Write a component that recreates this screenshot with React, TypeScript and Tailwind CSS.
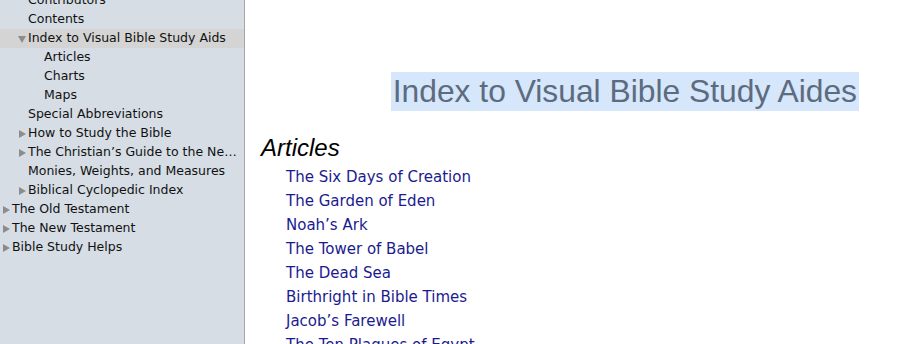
const tree = [
  { label: "Contributors", level: 1, arrow: null },
  { label: "Contents", level: 1, arrow: null },
  { label: "Index to Visual Bible Study Aids", level: 1, arrow: "down", selected: true },
  { label: "Articles", level: 2, arrow: null },
  { label: "Charts", level: 2, arrow: null },
  { label: "Maps", level: 2, arrow: null },
  { label: "Special Abbreviations", level: 1, arrow: null },
  { label: "How to Study the Bible", level: 1, arrow: "right" },
  { label: "The Christian’s Guide to the Ne…", level: 1, arrow: "right" },
  { label: "Monies, Weights, and Measures", level: 1, arrow: null },
  { label: "Biblical Cyclopedic Index", level: 1, arrow: "right" },
  { label: "The Old Testament", level: 0, arrow: "right" },
  { label: "The New Testament", level: 0, arrow: "right" },
  { label: "Bible Study Helps", level: 0, arrow: "right" },
];

const articles = [
  "The Six Days of Creation",
  "The Garden of Eden",
  "Noah’s Ark",
  "The Tower of Babel",
  "The Dead Sea",
  "Birthright in Bible Times",
  "Jacob’s Farewell",
  "The Ten Plagues of Egypt",
];

const Arrow = ({ dir }: { dir: string }) => (
  <svg width="8" height="8" viewBox="0 0 8 8" className="shrink-0">
    {dir === "down" ? (
      <polygon points="0,1 8,1 4,8" fill="#8c8c8c" />
    ) : (
      <polygon points="1,0 8,4 1,8" fill="#8c8c8c" />
    )}
  </svg>
);

const TreeRow = ({ item }) => {
  const pad = item.level === 0 ? "pl-[2px]" : item.level === 1 ? "pl-[18px]" : "pl-[34px]";
  return (
    <div
      className={`h-[19px] flex items-center ${pad} ${item.selected ? "bg-[#d4d4d4]" : ""}`}
    >
      <span className="w-[10px] flex items-center">
        {item.arrow ? <Arrow dir={item.arrow} /> : null}
      </span>
      <span className="whitespace-nowrap text-[#111]">{item.label}</span>
    </div>
  );
};

export default function App() {
  return (
    <div className="w-[900px] h-[344px] flex overflow-hidden bg-white">
      <div
        className="w-[245px] shrink-0 bg-[#d6dde5] border-r border-[#a5a5a5] -mt-[9px] text-[12.5px]"
        style={{ fontFamily: '"DejaVu Sans", sans-serif' }}
      >
        {tree.map((item, idx) => (
          <TreeRow key={idx} item={item} />
        ))}
      </div>
      <div className="flex-1 flex flex-col">
        <div className="flex justify-end pr-[41px] pt-[72px]">
          <h1
            className="bg-[#d6e6fb] text-[#5c6b80] text-[31.8px] leading-[39px] px-[2px] whitespace-nowrap"
            style={{ fontFamily: '"Liberation Sans", Arial, sans-serif' }}
          >
            Index to Visual Bible Study Aides
          </h1>
        </div>
        <h2
          className="mt-[22px] pl-[16px] italic text-black text-[24px] leading-[30px]"
          style={{ fontFamily: '"Liberation Sans", Arial, sans-serif' }}
        >
          Articles
        </h2>
        <ul
          className="mt-[2px] pl-[41px] text-[#1b1b8f] text-[15px] leading-[24px]"
          style={{ fontFamily: '"DejaVu Sans", sans-serif' }}
        >
          {articles.map((a, idx) => (
            <li key={idx} className="whitespace-nowrap">
              {a}
            </li>
          ))}
        </ul>
      </div>
    </div>
  );
}
